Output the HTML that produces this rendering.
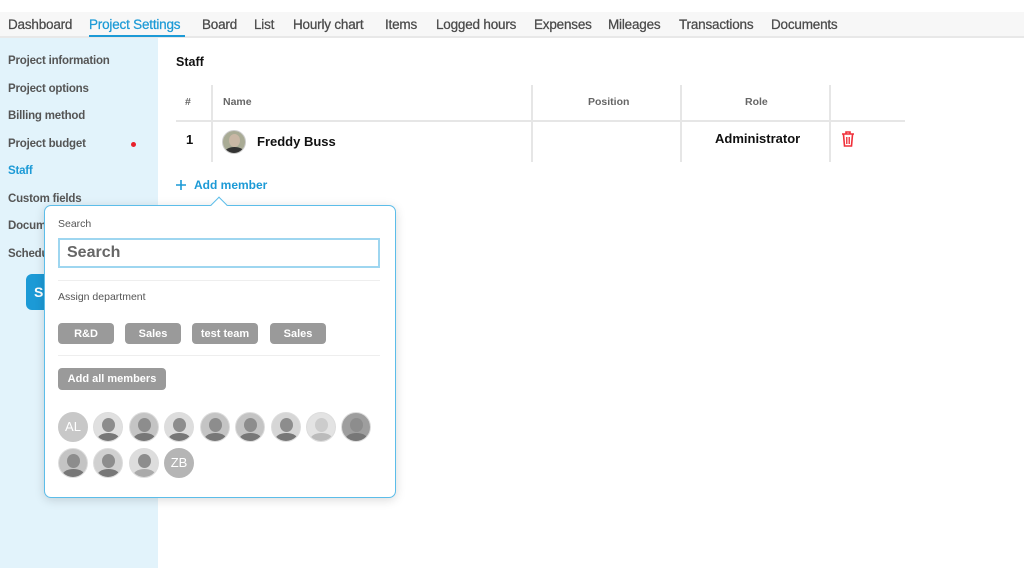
<!DOCTYPE html>
<html><head><style>
*{margin:0;padding:0;box-sizing:border-box}
body{width:1024px;height:568px;background:#fff;font-family:"Liberation Sans",sans-serif;position:relative;overflow:hidden;color:#333}
.a{position:absolute;white-space:nowrap}
.nav{position:absolute;left:0;top:12px;width:1024px;height:26px;background:#f7f7f7;border-bottom:2px solid #e8e8e8}
.nav span{position:absolute;top:5px;font-size:13.5px;color:#4a4a4a;letter-spacing:-0.2px;-webkit-text-stroke:0.25px #4a4a4a}
.side{position:absolute;left:0;top:38px;width:158px;height:530px;background:#e2f3fb}
.side span{position:absolute;left:8px;font-size:11.5px;font-weight:bold;color:#555;letter-spacing:-0.2px}
.th{font-size:10.5px;color:#666;font-weight:bold}
.vl{position:absolute;top:85px;width:2px;height:77px;background:#e6e6e6}
.chip{position:absolute;top:323px;height:21px;background:#9a9a9a;color:#fff;font-size:11px;font-weight:bold;border-radius:4px;text-align:center;line-height:22px}
.av{position:absolute;width:30px;height:30px;border-radius:50%;background:#c4c4c4;border:1px solid #ddd;color:#fff;font-size:13px;text-align:center;line-height:28px;overflow:hidden}
.av i{position:absolute;left:8px;top:5px;width:13px;height:14px;border-radius:50%;background:#8d8d8d}
.av b{position:absolute;left:3px;top:20px;width:23px;height:14px;border-radius:50%;background:#777}
</style></head><body>
<div class="nav">
<span style="left:8px">Dashboard</span>
<span style="left:89px;color:#1c9ad6;-webkit-text-stroke-color:#1c9ad6">Project Settings</span>
<div class="a" style="left:89px;top:23px;width:96px;height:2px;background:#1c9ad6"></div>
<span style="left:202px">Board</span>
<span style="left:254px">List</span>
<span style="left:293px">Hourly chart</span>
<span style="left:385px">Items</span>
<span style="left:436px">Logged hours</span>
<span style="left:534px">Expenses</span>
<span style="left:608px">Mileages</span>
<span style="left:679px">Transactions</span>
<span style="left:771px">Documents</span>
</div>
<div class="side">
<span style="top:17px">Project information</span>
<span style="top:45px">Project options</span>
<span style="top:72px">Billing method</span>
<span style="top:100px">Project budget</span>
<div class="a" style="left:131px;top:104px;width:5px;height:5px;border-radius:50%;background:#e8202a"></div>
<span style="top:127px;color:#1c9ad6">Staff</span>
<span style="top:155px">Custom fields</span>
<span style="top:182px">Documents</span>
<span style="top:210px">Schedule</span>
<div class="a" style="left:26px;top:236px;width:60px;height:36px;border-radius:6px;background:#1c9ad6;color:#fff;font-weight:bold;font-size:14px;padding:10px 8px">S</div>
</div>

<div class="a" style="left:176px;top:55px;font-size:12.5px;font-weight:bold;color:#111">Staff</div>
<div class="a" style="left:176px;top:120px;width:729px;height:2px;background:#e6e6e6"></div>
<div class="vl" style="left:211px"></div>
<div class="vl" style="left:531px"></div>
<div class="vl" style="left:680px"></div>
<div class="vl" style="left:829px"></div>
<div class="a th" style="left:185px;top:96px">#</div>
<div class="a th" style="left:223px;top:96px">Name</div>
<div class="a th" style="left:588px;top:96px">Position</div>
<div class="a th" style="left:745px;top:96px">Role</div>
<div class="a" style="left:186px;top:132px;font-size:13px;font-weight:bold;color:#111">1</div>
<div class="a" style="left:222px;top:130px;width:24px;height:24px;border-radius:50%;background:#a9ab95;border:1px solid #ccc;overflow:hidden"><div class="a" style="left:6px;top:3px;width:11px;height:13px;border-radius:50%;background:#c9b7a5"></div><div class="a" style="left:2px;top:16px;width:19px;height:10px;border-radius:50%;background:#333"></div></div>
<div class="a" style="left:257px;top:134px;font-size:13px;font-weight:bold;color:#111">Freddy Buss</div>
<div class="a" style="left:715px;top:131px;font-size:13px;font-weight:bold;color:#111">Administrator</div>
<svg class="a" style="left:841px;top:131px" width="14" height="16" viewBox="0 0 14 16"><path d="M1 3h12M5 3V1h4v2M2.5 3.5l1 11.5h7l1-11.5" fill="none" stroke="#f0303a" stroke-width="1.6"/><path d="M5.5 6v7M7 6v7M8.5 6v7" stroke="#f0303a" stroke-width="0.9"/></svg>
<svg class="a" style="left:176px;top:180px" width="10" height="10" viewBox="0 0 10 10"><path d="M5 0v10M0 5h10" stroke="#1c9ad6" stroke-width="1.6"/></svg>
<div class="a" style="left:194px;top:178px;font-size:12px;font-weight:bold;color:#1c9ad6">Add member</div>

<div class="a" style="left:44px;top:205px;width:352px;height:293px;border:1px solid #5cbde9;border-radius:7px;background:#fff;box-shadow:0 2px 10px rgba(0,0,0,0.15)"></div>
<div class="a" style="left:213px;top:199px;width:12px;height:12px;background:#fff;border-left:1px solid #5cbde9;border-top:1px solid #5cbde9;transform:rotate(45deg)"></div>
<div class="a" style="left:58px;top:218px;font-size:10.5px;color:#555">Search</div>
<div class="a" style="left:58px;top:238px;width:322px;height:30px;border:2px solid #9ed6f0;font-size:16px;color:#666;padding:4px 7px;font-weight:bold">Search</div>
<div class="a" style="left:58px;top:280px;width:322px;height:1px;background:#eee"></div>
<div class="a" style="left:58px;top:291px;font-size:10.5px;color:#555">Assign department</div>
<div class="chip" style="left:58px;width:56px">R&amp;D</div>
<div class="chip" style="left:125px;width:56px">Sales</div>
<div class="chip" style="left:192px;width:66px">test team</div>
<div class="chip" style="left:270px;width:56px">Sales</div>
<div class="a" style="left:58px;top:355px;width:322px;height:1px;background:#eee"></div>
<div class="chip" style="left:58px;top:368px;width:108px;height:22px;line-height:23px">Add all members</div>

<div class="av" style="left:58px;top:412px;background:#c8c8c8;border-color:#c8c8c8">AL</div>
<div class="av" style="left:93px;top:412px;background:#e0e0e0"><i></i><b></b></div>
<div class="av" style="left:129px;top:412px"><i></i><b></b></div>
<div class="av" style="left:164px;top:412px;background:#ddd"><i></i><b></b></div>
<div class="av" style="left:200px;top:412px"><i></i><b></b></div>
<div class="av" style="left:235px;top:412px"><i></i><b></b></div>
<div class="av" style="left:271px;top:412px;background:#d6d6d6"><i></i><b></b></div>
<div class="av" style="left:306px;top:412px;background:#e3e3e3"><i style="background:#ccc"></i><b style="background:#bbb"></b></div>
<div class="av" style="left:341px;top:412px;background:#9e9e9e"><i></i><b></b></div>
<div class="av" style="left:58px;top:448px"><i></i><b></b></div>
<div class="av" style="left:93px;top:448px;background:#d0d0d0"><i></i><b></b></div>
<div class="av" style="left:129px;top:448px;background:#ddd"><i></i><b style="background:#aaa"></b></div>
<div class="av" style="left:164px;top:448px;background:#b5b5b5;border-color:#b5b5b5">ZB</div>
</body></html>
